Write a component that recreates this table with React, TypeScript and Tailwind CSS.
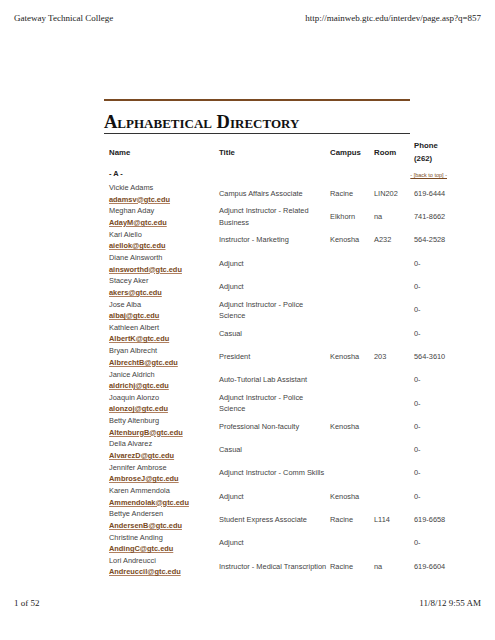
const rows: [string, string, string, string, string, string][] = [
  ["Vickie Adams", "adamsv@gtc.edu", "Campus Affairs Associate", "Racine", "LIN202", "619-6444"],
  ["Meghan Aday", "AdayM@gtc.edu", "Adjunct Instructor - Related\nBusiness", "Elkhorn", "na", "741-8662"],
  ["Kari Aiello", "aiellok@gtc.edu", "Instructor - Marketing", "Kenosha", "A232", "564-2528"],
  ["Diane Ainsworth", "ainsworthd@gtc.edu", "Adjunct", "", "", "0-"],
  ["Stacey Aker", "akers@gtc.edu", "Adjunct", "", "", "0-"],
  ["Jose Alba", "albaj@gtc.edu", "Adjunct Instructor - Police\nScience", "", "", "0-"],
  ["Kathleen Albert", "AlbertK@gtc.edu", "Casual", "", "", "0-"],
  ["Bryan Albrecht", "AlbrechtB@gtc.edu", "President", "Kenosha", "203", "564-3610"],
  ["Janice Aldrich", "aldrichj@gtc.edu", "Auto-Tutorial Lab Assistant", "", "", "0-"],
  ["Joaquin Alonzo", "alonzoj@gtc.edu", "Adjunct Instructor - Police\nScience", "", "", "0-"],
  ["Betty Altenburg", "AltenburgB@gtc.edu", "Professional Non-faculty", "Kenosha", "", "0-"],
  ["Della Alvarez", "AlvarezD@gtc.edu", "Casual", "", "", "0-"],
  ["Jennifer Ambrose", "AmbroseJ@gtc.edu", "Adjunct Instructor - Comm Skills", "", "", "0-"],
  ["Karen Ammendola", "Ammendolak@gtc.edu", "Adjunct", "Kenosha", "", "0-"],
  ["Bettye Andersen", "AndersenB@gtc.edu", "Student Express Associate", "Racine", "L114", "619-6658"],
  ["Christine Anding", "AndingC@gtc.edu", "Adjunct", "", "", "0-"],
  ["Lori Andreucci", "Andreuccil@gtc.edu", "Instructor - Medical Transcription", "Racine", "na", "619-6604"],
];

const serif = "font-['Liberation_Serif',serif]";

function App() {
  return (
    <main className="w-[495px] h-[640px] bg-white relative text-[#333]">
      <header className={`${serif} flex justify-between px-[14px] pt-[12px] text-[9px] text-[#222]`}>
        <span>Gateway Technical College</span>
        <span>http://mainweb.gtc.edu/interdev/page.asp?q=857</span>
      </header>

      <section className="ml-[104px] w-[306px] mt-[73px] font-['Liberation_Sans',Arial,sans-serif]">
        <div className="h-[2px] bg-[#7a4a22]" />
        <h1 className={`${serif} mt-[12px] font-bold text-[18.5px] leading-[19px] text-[#111] [font-variant:small-caps]`}>
          Alphabetical Directory
        </h1>
        <div className="mt-[1px] h-[1.5px] bg-[#333]" />

        <table className="mt-[4px] w-[345px] table-fixed border-collapse text-[7.4px] leading-[11.5px]">
          <colgroup>
            <col className="w-[110px]" />
            <col className="w-[111px]" />
            <col className="w-[44px]" />
            <col className="w-[40px]" />
            <col className="w-[40px]" />
          </colgroup>
          <thead>
            <tr className="h-[28px] font-bold text-[#222] text-[7.8px] leading-[13px]">
              <th className="text-left pl-[5px]">Name</th>
              <th className="text-left pl-[5px]">Title</th>
              <th className="text-left pl-[5px]">Campus</th>
              <th className="text-left pl-[5px]">Room</th>
              <th className="text-left pl-[5px]">Phone (262)</th>
            </tr>
          </thead>
          <tbody>
            <tr className="h-[16px]">
              <td className="pl-[5px] font-bold text-[#222]">- A -</td>
              <td />
              <td />
              <td />
              <td className="text-right pr-[2px] pt-[3px] text-[5.5px] text-[#7a4a22] underline whitespace-nowrap">- [back to top] -</td>
            </tr>
            {rows.map(([name, email, title, campus, room, phone]) => (
              <tr key={email} className="h-[23.3px]">
                <td className="pl-[5px] align-middle">
                  <div className="text-[#444]">{name}</div>
                  <div className="font-bold text-[#7a4a22] underline decoration-[#b08060]">{email}</div>
                </td>
                <td className="pl-[5px] align-middle text-[#444] whitespace-pre">{title}</td>
                <td className="pl-[5px] align-middle text-[#444]">{campus}</td>
                <td className="pl-[5px] align-middle text-[#444]">{room}</td>
                <td className="pl-[5px] align-middle text-[#444]">{phone}</td>
              </tr>
            ))}
          </tbody>
        </table>
      </section>

      <footer className={`${serif} absolute left-0 right-0 top-[597px] flex justify-between px-[14px] text-[9px] text-[#222]`}>
        <span>1 of 52</span>
        <span>11/8/12 9:55 AM</span>
      </footer>
    </main>
  );
}

export default App;
